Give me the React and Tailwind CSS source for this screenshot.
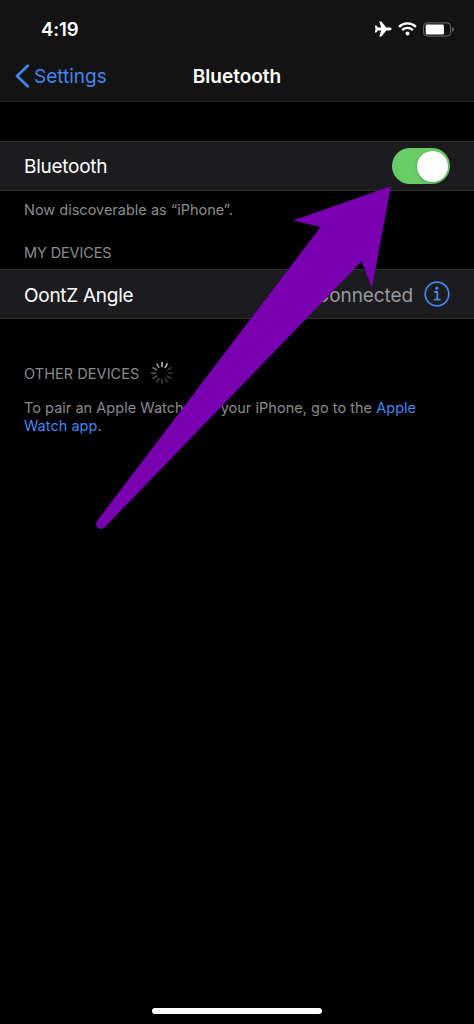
// src/pages/BluetoothPage.jsx
const SPOKES = [0.85, 0.8, 0.25, 0.25, 0.25, 0.25, 0.27, 0.3, 0.36, 0.42, 0.5, 0.62]

function StatusBar() {
  return (
    <div className="flex h-[58px] items-center justify-between pl-[41px] pr-[20px]">
      <span className="text-[18.5px] font-semibold leading-none tracking-[-0.1px]">4:19</span>
      <div className="flex items-center">
        <svg className="h-[16px] w-[18px]" viewBox="0 0 18 16" fill="currentColor">
          <path d="M17.6 8c0-.9-1-1.4-2-1.4h-3.3L7.4.6H5.2l2 6H4.1L2.3 4.5H.9L1.5 8 .9 11.5h1.4l1.8-2.1h3.1l-2 6h2.2l4.9-6h3.3c1 0 2-.5 2-1.4Z" />
        </svg>
        <svg className="ml-[6px] h-[14px] w-[19px]" viewBox="0 0 19 14" fill="none" stroke="currentColor">
          <path d="M1.1 4.8a12 12 0 0 1 16.8 0" strokeWidth="2.4" />
          <path d="M4.2 8.1a7.6 7.6 0 0 1 10.6 0" strokeWidth="2.3" />
          <circle cx="9.5" cy="11.4" r="2" fill="currentColor" stroke="none" />
        </svg>
        <svg className="ml-[6px] h-[15px] w-[31px]" viewBox="0 0 31 15">
          <rect x="0.6" y="0.9" width="27" height="13.2" rx="3.4" fill="none" stroke="#6c6c6c" />
          <rect x="2.7" y="2.6" width="18.2" height="9.9" rx="1.3" fill="#fff" />
          <path d="M29.2 5.3c1.1.4 1.5 1.2 1.5 2.2s-.4 1.8-1.5 2.2Z" fill="#777" />
        </svg>
      </div>
    </div>
  )
}

function NavBar() {
  return (
    <div className="grid h-[43px] grid-cols-[1fr_auto_1fr] items-start">
      <a className="flex h-[36px] items-center pl-[15px] text-[#4386f0]">
        <svg className="h-[24px] w-[15px]" viewBox="0 0 15 24" fill="none" stroke="currentColor" strokeWidth="2.7" strokeLinecap="round" strokeLinejoin="round">
          <path d="M12.7 1.8 2 12l10.7 10.2" />
        </svg>
        <span className="ml-[4px] pt-[2px] text-[19px]">Settings</span>
      </a>
      <h1 className="flex h-[36px] items-center pt-[2px] text-[19px] font-semibold">Bluetooth</h1>
      <span />
    </div>
  )
}

function Row({ label, labelClass = 'pt-[2px]', children }) {
  return (
    <div className="flex h-[50px] items-center justify-between border-y border-[#303031] bg-[#1c1c1e] px-[24px] text-white">
      <span className={`text-[19px] tracking-[-0.27px] ${labelClass}`}>{label}</span>
      {children}
    </div>
  )
}

function Toggle() {
  return (
    <div className="flex h-[36px] w-[58px] items-center justify-end rounded-full bg-[#67ce67] pr-[2px]">
      <div className="size-[31px] rounded-full bg-white shadow-[0_1px_3px_rgba(0,0,0,0.25)]" />
    </div>
  )
}

function InfoIcon() {
  return (
    <svg className="size-[26px] text-[#4386f0]" viewBox="0 0 26 26" fill="none" stroke="currentColor">
      <circle cx="13" cy="13" r="11.8" strokeWidth="1.7" />
      <circle cx="12.8" cy="7.2" r="1.6" fill="currentColor" stroke="none" />
      <path d="M10.3 11h3v7.5M9.8 18.6h6.7" strokeWidth="1.8" />
    </svg>
  )
}

function Spinner() {
  return (
    <svg className="size-[24px]" viewBox="0 0 24 24" stroke="#dcdcdc" strokeWidth="1.6" strokeLinecap="round">
      {SPOKES.map((opacity, i) => (
        <path key={i} d="M12 1.6v4" opacity={opacity} transform={`rotate(${i * 30} 12 12)`} />
      ))}
    </svg>
  )
}

export default function App() {
  return (
    <div className="relative flex h-[1024px] w-[474px] flex-col overflow-hidden bg-black font-['Inter',sans-serif] text-white">
      <header className="h-[102px] border-b border-[#232323] bg-[#131313]">
        <StatusBar />
        <NavBar />
      </header>

      <main className="flex-1 pt-[39px] text-[14.5px] text-[#8b8b8d]">
        <Row label="Bluetooth">
          <Toggle />
        </Row>
        <p className="mt-[10px] pl-[24px] leading-[18px]">Now discoverable as “iPhone”.</p>

        <h2 className="mt-[24px] mb-[6px] pl-[24px] leading-[20px] tracking-[-0.13px]">MY DEVICES</h2>
        <Row label="OontZ Angle" labelClass="pt-[4px]">
          <div className="flex items-center">
            <span className="pt-[4px] text-[19px] tracking-[-0.1px] text-[#98989d]">Connected</span>
            <span className="ml-[11px]"><InfoIcon /></span>
          </div>
        </Row>

        <div className="mt-[42px] flex h-[24px] items-center pl-[24px]">
          <h2 className="pt-[2px] tracking-[0.06px]">OTHER DEVICES</h2>
          <span className="ml-[11px]"><Spinner /></span>
        </div>
        <p className="mt-[14px] pl-[24px] leading-[18px] tracking-[0.03px]">
          To pair an Apple Watch with your iPhone, go to the <a className="text-[#4386f0]">Apple</a>
          <br />
          <a className="text-[#4386f0]">Watch app</a>.
        </p>
      </main>

      {/* Home indicator */}
      <div className="mb-[10px] h-[6px] w-[170px] self-center rounded-full bg-white" />

      {/* Arrow pointing at the toggle */}
      <svg className="pointer-events-none absolute inset-0 h-[1024px] w-[474px]" viewBox="0 0 474 1024" fill="#7800b0">
        <path d="M391 186 293 220.5 320.5 227 97.2 520.7A5 5 0 0 0 105 527L361.5 261.5 372 287.5Z" />
      </svg>
    </div>
  )
}
